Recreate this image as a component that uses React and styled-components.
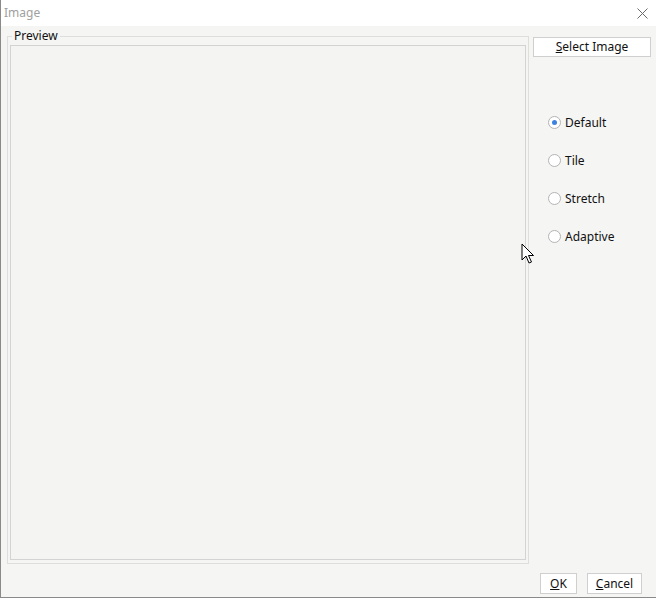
import React, { useState } from 'react';
import styled, { createGlobalStyle } from 'styled-components';

const Global = createGlobalStyle`
  html, body { margin: 0; padding: 0; background: #f5f5f4; }
  body { font-family: "Noto Sans", "Open Sans", sans-serif; font-size: 12px; color: #1a1a1a; }
`;

const Window = styled.div`
  position: relative;
  width: 656px;
  height: 598px;
  box-sizing: border-box;
  border-left: 1px solid #8a8a8a;
  border-bottom: 1px solid #8a8a8a;
  background: #f5f5f4;
  display: flex;
  flex-direction: column;
  overflow: hidden;
`;

const TitleBar = styled.div`
  height: 26px;
  flex: none;
  background: #ffffff;
  display: flex;
  align-items: center;
  justify-content: space-between;
  padding: 0 8px 0 3px;
`;

const Title = styled.span`
  color: #a0a0a0;
  font-size: 12px;
  margin-top: -1px;
`;

const Close = styled.svg`
  width: 11px;
  height: 11px;
`;

const Body = styled.div`
  flex: 1;
  display: flex;
  padding: 3px 4px 0 6px;
  gap: 4px;
`;

const Group = styled.fieldset`
  width: 522px;
  height: 535px;
  box-sizing: border-box;
  margin: 0;
  padding: 2px 2px 3px 2px;
  border: 1px solid #dedede;
  display: flex;
`;

const Legend = styled.legend`
  padding: 0 2px;
  margin-left: 2px;
  color: #111;
  font-size: 12px;
  line-height: 14px;
`;

const Preview = styled.div`
  flex: 1;
  border: 1px solid #d3d3d3;
  background: #f4f4f2;
`;

const Side = styled.div`
  width: 118px;
  display: flex;
  flex-direction: column;
  padding-top: 8px;
`;

const Button = styled.button`
  font-family: inherit;
  font-size: 12px;
  color: #111;
  background: #ffffff;
  border: 1px solid #cfcfcf;
  height: ${p => p.$h || 20}px;
  width: ${p => p.$w}px;
  padding: 0;
  line-height: 1;
  u { text-decoration: underline; }
`;

const Radios = styled.div`
  display: flex;
  flex-direction: column;
  gap: 20px;
  padding: 56px 0 0 15px;
`;

const RadioRow = styled.label`
  display: flex;
  align-items: center;
  height: 18px;
  gap: 4px;
  color: #111;
`;

const Dot = styled.span`
  width: 11px;
  height: 11px;
  border-radius: 50%;
  border: 1px solid #b4b4b4;
  background: #fff;
  display: flex;
  align-items: center;
  justify-content: center;
  &::after {
    content: '';
    width: 5px;
    height: 5px;
    border-radius: 50%;
    background: ${p => (p.$on ? '#3d82e0' : 'transparent')};
  }
`;

const Footer = styled.div`
  height: 29px;
  flex: none;
  display: flex;
  justify-content: flex-end;
  align-items: flex-start;
  gap: 10px;
  padding: 5px 14px 0 0;
  box-sizing: border-box;
`;

const Cursor = styled.svg`
  position: absolute;
  left: 520px;
  top: 243px;
  width: 14px;
  height: 22px;
`;

const options = ['Default', 'Tile', 'Stretch', 'Adaptive'];

export default function App() {
  const [mode, setMode] = useState('Default');
  return (
    <>
      <Global />
      <Window>
        <TitleBar>
          <Title>Image</Title>
          <Close viewBox="0 0 11 11">
            <path d="M0.5 0.5 L10.5 10.5 M10.5 0.5 L0.5 10.5" stroke="#6a6a6a" strokeWidth="1" />
          </Close>
        </TitleBar>
        <Body>
          <Group>
            <Legend>Preview</Legend>
            <Preview />
          </Group>
          <Side>
            <Button $w={118} $h={20}><u>S</u>elect Image</Button>
            <Radios>
              {options.map(o => (
                <RadioRow key={o} onClick={() => setMode(o)}>
                  <Dot $on={mode === o} />
                  {o}
                </RadioRow>
              ))}
            </Radios>
          </Side>
        </Body>
        <Footer>
          <Button $w={37} $h={21}><u>O</u>K</Button>
          <Button $w={55} $h={21}><u>C</u>ancel</Button>
        </Footer>
        <Cursor viewBox="0 0 14 22">
          <path d="M1 1 L1 17 L5 13 L8 20 L10.5 19 L7.5 12.5 L12.5 12.5 Z" fill="#fff" stroke="#000" strokeWidth="1" strokeLinejoin="miter" />
        </Cursor>
      </Window>
    </>
  );
}
